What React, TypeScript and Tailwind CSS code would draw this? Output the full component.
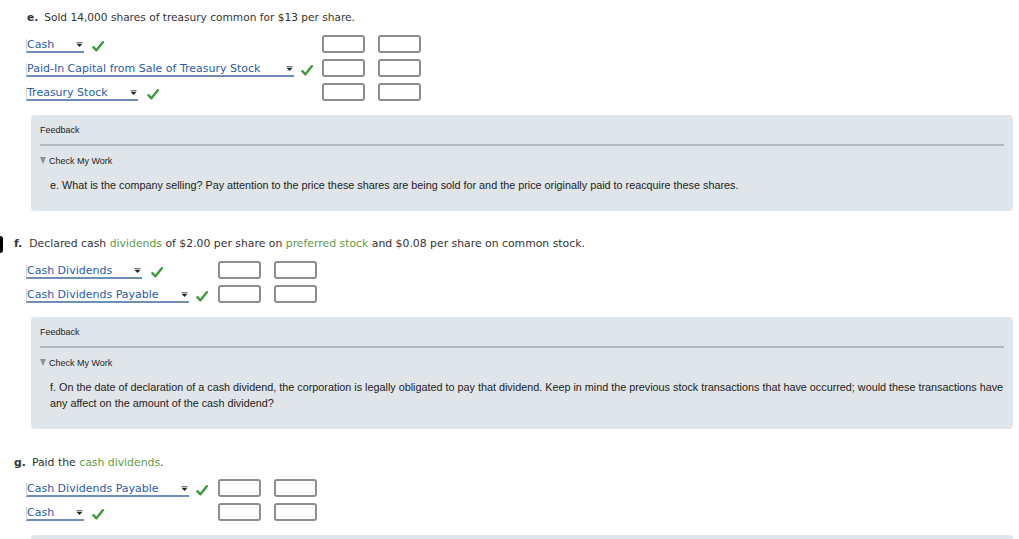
import React from "react";

const VERD = { fontFamily: '"DejaVu Sans", Verdana, sans-serif' };
const ARIAL = { fontFamily: '"Liberation Sans", Arial, sans-serif' };

function Check() {
  return (
    <svg width="12" height="11" viewBox="0 0 12 11" className="shrink-0">
      <path d="M1.4 6.2 L4.4 9.3 L10.8 1.2" fill="none" stroke="#3f9b3f" strokeWidth="2.4" strokeLinecap="round" strokeLinejoin="round" />
    </svg>
  );
}

function Arrow() {
  return (
    <svg width="7" height="6" viewBox="0 0 7 6" className="shrink-0">
      <path d="M0.5 0.5 L6.5 0.5" stroke="#777" strokeWidth="1" />
      <path d="M0.5 1.8 L6.5 1.8 L3.5 5 Z" fill="#222" />
    </svg>
  );
}

function Select({ label, w }: { label: string; w: string }) {
  return (
    <div
      className={`${w} h-[14px] flex items-center justify-between bg-white border-b-2 border-b-[#6f8fb4] border-l border-l-[#d6d6d6] pr-[1px] text-[11px] leading-[12px] text-[#2a5ca8]`}
      style={VERD}
    >
      <span className="whitespace-nowrap">{label}</span>
      <Arrow />
    </div>
  );
}

function Box() {
  return <div className="w-[43px] h-[18px] border-2 border-[#8e8e8e] rounded-[3px] bg-white" />;
}

function Row({ label, sw, gap, col }: { label: string; sw: string; gap: string; col: string }) {
  return (
    <div className="h-[24px] flex items-center">
      <div className={`${col} pl-[26px] mt-[4px] flex items-center shrink-0`}>
        <Select label={label} w={sw} />
        <div className={gap}>
          <Check />
        </div>
      </div>
      <div className="flex gap-[13px]">
        <Box />
        <Box />
      </div>
    </div>
  );
}

function Panel({ lines }: { lines: string[] }) {
  return (
    <div className="ml-[31px] mr-[6px] bg-[#dfe5e8] rounded-[4px] px-[9px] pt-[7px] pb-[18px]" style={ARIAL}>
      <div className="h-[18px] flex items-center text-[9px] text-[#222]">Feedback</div>
      <div className="mt-[4px] h-[2px] bg-[#b2b8bb]" />
      <div className="mt-[7px] h-[18px] flex items-center text-[9px] text-[#222]">
        <svg width="6" height="8" viewBox="0 0 6 8" className="mr-[3px] -mt-[3px]">
          <path d="M0 0 L6 0 L3 7 Z" fill="#8d9296" />
        </svg>
        Check My Work
      </div>
      <div className="mt-[6px] pl-[10px] text-[10.8px] leading-[16px] text-[#222]">
        {lines.map((l, i) => (
          <div key={i} className="whitespace-nowrap">
            {l}
          </div>
        ))}
      </div>
    </div>
  );
}

export default function App() {
  const G = "text-[#5f9b45]";
  return (
    <div className="w-[1019px] h-[539px] overflow-hidden bg-white relative" style={VERD}>
      {/* e */}
      <div className="pt-[9px] h-[27px] flex items-end">
        <div className="h-[18px] flex items-center pl-[27px] text-[10.6px] text-[#333]">
          <span className="font-bold">e.</span>
          <span className="ml-[6px]">Sold 14,000 shares of treasury common for $13 per share.</span>
        </div>
      </div>
      <div className="mt-[5px]">
        <Row label="Cash" sw="w-[58px]" gap="ml-[8px]" col="w-[322px]" />
        <Row label="Paid-In Capital from Sale of Treasury Stock" sw="w-[268px]" gap="ml-[7px]" col="w-[322px]" />
        <Row label="Treasury Stock" sw="w-[112px]" gap="ml-[9px]" col="w-[322px]" />
      </div>
      <div className="mt-[11px]">
        <Panel
          lines={[
            "e. What is the company selling? Pay attention to the price these shares are being sold for and the price originally paid to reacquire these shares.",
          ]}
        />
      </div>

      {/* f */}
      <div className="mt-[24px] h-[18px] flex items-center text-[10.85px] text-[#333]">
        <div className="w-[3px] h-[17px] bg-black rounded-r-full" />
        <span className="ml-[11px] font-bold">f.</span>
        <span className="ml-[7px]">
          Declared cash <span className={G}>dividends</span> of $2.00 per share on{" "}
          <span className={G}>preferred stock</span> and $0.08 per share on common stock.
        </span>
      </div>
      <div className="mt-[5px]">
        <Row label="Cash Dividends" sw="w-[116px]" gap="ml-[9px]" col="w-[218px]" />
        <Row label="Cash Dividends Payable" sw="w-[163px]" gap="ml-[7px]" col="w-[218px]" />
      </div>
      <div className="mt-[11px]">
        <Panel
          lines={[
            "f. On the date of declaration of a cash dividend, the corporation is legally obligated to pay that dividend. Keep in mind the previous stock transactions that have occurred; would these transactions have",
            "any affect on the amount of the cash dividend?",
          ]}
        />
      </div>

      {/* g */}
      <div className="mt-[25px] h-[18px] flex items-center pl-[14px] text-[10.85px] text-[#333]">
        <span className="font-bold">g.</span>
        <span className="ml-[6px]">
          Paid the <span className={G}>cash dividends</span>.
        </span>
      </div>
      <div className="mt-[4px]">
        <Row label="Cash Dividends Payable" sw="w-[163px]" gap="ml-[7px]" col="w-[218px]" />
        <Row label="Cash" sw="w-[58px]" gap="ml-[8px]" col="w-[218px]" />
      </div>
      <div className="mt-[11px] ml-[31px] mr-[6px] h-[40px] bg-[#dfe5e8] rounded-[4px]" />
    </div>
  );
}
